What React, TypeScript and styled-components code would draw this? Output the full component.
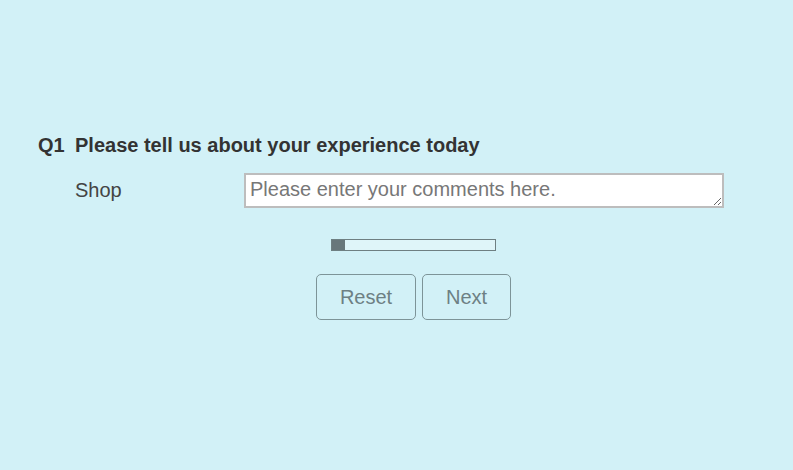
import React from "react";
import styled, { createGlobalStyle } from "styled-components";

const Global = createGlobalStyle`
  html, body { margin: 0; padding: 0; background: #d2f1f7; }
  body { font-family: "Liberation Sans", Arial, sans-serif; }
`;

const Page = styled.div`
  width: 793px;
  height: 470px;
  background: #d2f1f7;
  box-sizing: border-box;
  padding-top: 134px;
  padding-left: 38px;
`;

const Form = styled.div`
  width: 751px;
  display: flex;
  flex-direction: column;
`;

const QuestionTitle = styled.div`
  display: flex;
  font-size: 20px;
  font-weight: bold;
  color: #333;
  line-height: 22px;
`;

const QNum = styled.span`
  width: 37px;
`;

const AnswerRow = styled.div`
  display: flex;
  align-items: center;
  margin-top: 17px;
  padding-left: 37px;
`;

const Label = styled.div`
  width: 169px;
  font-size: 20px;
  color: #444;
`;

const Comment = styled.textarea`
  width: 480px;
  height: 35px;
  box-sizing: border-box;
  border: 2px solid #bdbdbd;
  background: #fff;
  font-family: "Liberation Sans", Arial, sans-serif;
  font-size: 20px;
  line-height: 23px;
  padding: 3px 4px 2px;
  margin: 0;
  outline: none;
  overflow: hidden;
  &::placeholder { color: #777; }
`;

const Progress = styled.div`
  align-self: center;
  margin-top: 31px;
  width: 165px;
  height: 12px;
  box-sizing: border-box;
  border: 1px solid #6e7f82;
  background: #dff5f9;
`;

const ProgressFill = styled.div`
  height: 100%;
  background: #68777b;
`;

const Buttons = styled.div`
  align-self: center;
  display: flex;
  gap: 6px;
  margin-top: 23px;
`;

const Btn = styled.button<{ $w: number }>`
  width: ${(p) => p.$w}px;
  height: 46px;
  border: 1px solid #7d9498;
  border-radius: 5px;
  background: #d2f1f7;
  color: #6d8084;
  font-family: "Liberation Sans", Arial, sans-serif;
  font-size: 20px;
  padding: 0;
`;

export default function App() {
  return (
    <Page>
      <Global />
      <Form>
        <QuestionTitle>
          <QNum>Q1</QNum>
          <span>Please tell us about your experience today</span>
        </QuestionTitle>
        <AnswerRow>
          <Label>Shop</Label>
          <Comment placeholder="Please enter your comments here." />
        </AnswerRow>
        <Progress>
          <ProgressFill style={{ width: "8%" }} />
        </Progress>
        <Buttons>
          <Btn $w={100}>Reset</Btn>
          <Btn $w={89}>Next</Btn>
        </Buttons>
      </Form>
    </Page>
  );
}
